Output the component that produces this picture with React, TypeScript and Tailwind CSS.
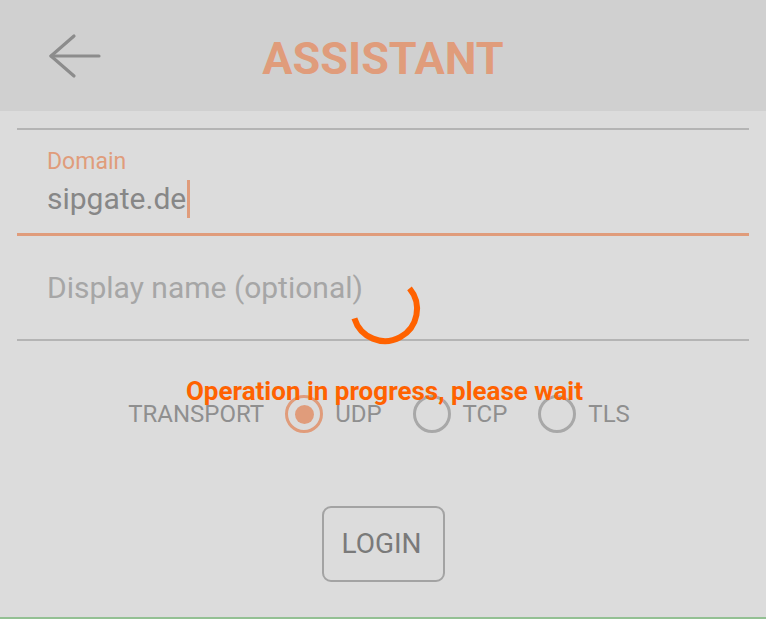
import type { ReactNode } from 'react'

const font = { fontFamily: 'Roboto, "Noto Sans", sans-serif' }

function BackArrow() {
  return (
    <svg width="54" height="46" viewBox="0 0 54 46" fill="none" stroke="#8c8c8c" strokeWidth="3.2" strokeLinecap="round" strokeLinejoin="round">
      <path d="M26 3 L3 23 L26 43" />
      <path d="M3 23 H51" />
    </svg>
  )
}

function Radio({ label, checked }: { label: string; checked?: boolean }) {
  return (
    <div className="flex items-center gap-[12px]">
      <div
        className={
          checked
            ? 'w-[38px] h-[38px] rounded-full border-[3.5px] border-[#e09c7b] flex items-center justify-center'
            : 'w-[38px] h-[38px] rounded-full border-[3.5px] border-[#a8a8a8]'
        }
      >
        {checked && <div className="w-[19px] h-[19px] rounded-full bg-[#e09c7b]" />}
      </div>
      <span className="text-[24px] leading-[28px] text-[#8f8f8f]">{label}</span>
    </div>
  )
}

function Divider({ className }: { className: string }) {
  return <div className={className} />
}

function Field({ children }: { children: ReactNode }) {
  return <div className="px-[30px]">{children}</div>
}

export default function App() {
  return (
    <div className="relative h-screen w-full flex flex-col bg-[#dcdcdc] overflow-hidden" style={font}>
      <header className="h-[111px] shrink-0 bg-[#d0d0d0] flex items-center pl-[48px]">
        <BackArrow />
        <h1 className="flex-1 text-center text-[45px] leading-[52px] font-bold text-[#e09c7b] pt-[6px]">ASSISTANT</h1>
        <div className="w-[102px]" />
      </header>

      <div className="px-[17px] flex flex-col">
        <Divider className="mt-[17px] h-[2px] bg-[#b4b4b4]" />

        <Field>
          <div className="mt-[19px] text-[23px] leading-[26px] text-[#e09c7b]">Domain</div>
          <div className="mt-[5px] flex items-center text-[30px] leading-[36px] text-[#878787]">
            <span>sipgate.de</span>
            <span className="ml-[1px] w-[2.5px] h-[38px] bg-[#e09c7b]" />
          </div>
        </Field>
        <Divider className="mt-[15px] h-[3px] bg-[#e09c7b]" />

        <Field>
          <div className="mt-[34px] text-[30px] leading-[36px] text-[#a6a6a6]">Display name (optional)</div>
        </Field>
        <Divider className="mt-[33px] h-[2px] bg-[#b4b4b4]" />

        <div className="mt-[53px] h-[40px] flex items-center justify-center gap-[31px] pr-[8px]">
          <span className="mr-[-10px] text-[24px] leading-[28px] text-[#8f8f8f]">TRANSPORT</span>
          <Radio label="UDP" checked />
          <Radio label="TCP" />
          <Radio label="TLS" />
        </div>

        <div className="mt-[72px] flex justify-center">
          <button className="w-[123px] h-[76px] rounded-[9px] border-2 border-[#a3a3a3] text-[28px] text-[#7a7a7a] pr-[3px]">
            LOGIN
          </button>
        </div>
      </div>

      <div className="mt-auto h-[2px] bg-[#93c093]" />

      <div className="absolute left-[345px] top-[269px]">
        <svg width="80" height="80" viewBox="0 0 80 80" fill="none">
          <path d="M64.51 19.43 A32 32 0 1 1 9.4 49.36" stroke="#ff6200" strokeWidth="6" />
        </svg>
      </div>
      <div className="absolute left-0 right-0 top-[376px] pl-[3px] text-center text-[26px] leading-[30px] font-bold text-[#ff6200]">
        Operation in progress, please wait
      </div>
    </div>
  )
}
